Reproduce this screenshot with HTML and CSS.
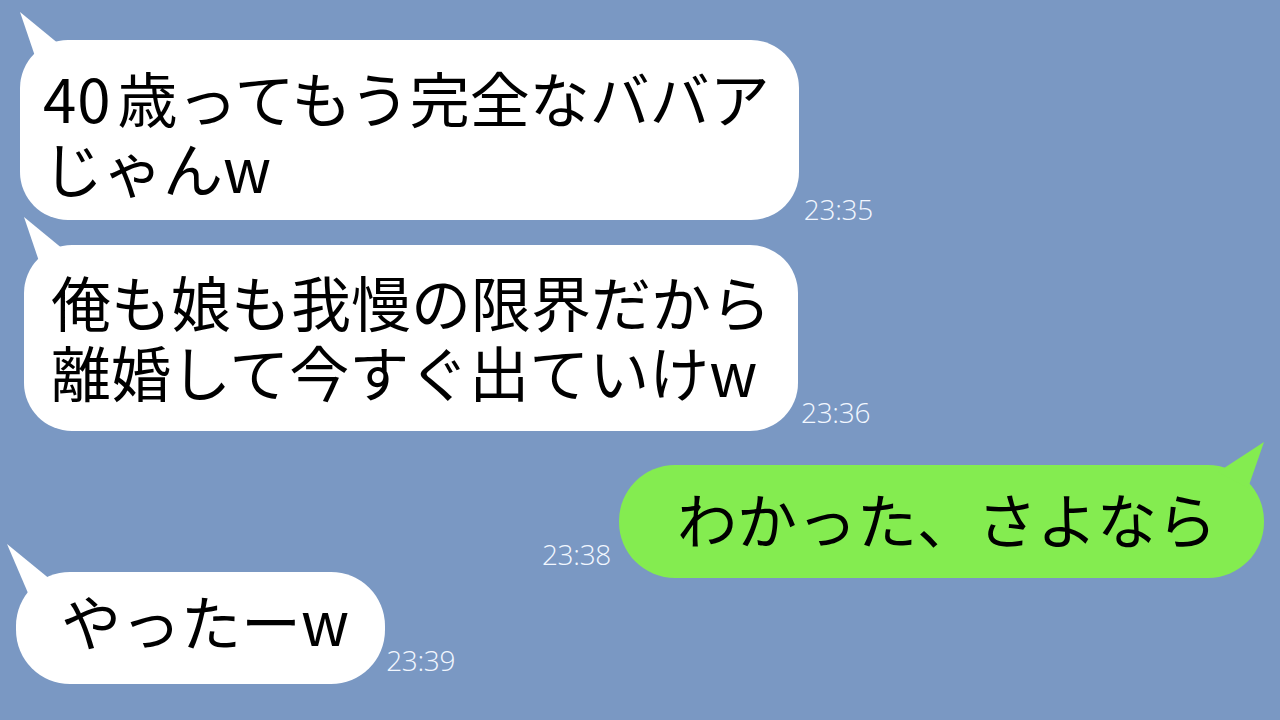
FILE: index.html
```html
<!DOCTYPE html>
<html lang="ja">
<head>
<meta charset="utf-8">
<title>トーク</title>
<link rel="stylesheet" href="styles.css">
</head>
<body>
<main class="chat">
  <div class="row row-in r1">
    <div class="bubble in b1"><span class="num">40</span>歳ってもう完全なババア<br>じゃんw</div>
    <span class="time t1">23:35</span>
  </div>
  <div class="row row-in r2">
    <div class="bubble in b2">俺も娘も我慢の限界だから<br>離婚して今すぐ出ていけw</div>
    <span class="time t2">23:36</span>
  </div>
  <div class="row row-out r3">
    <span class="time t3">23:38</span>
    <div class="bubble out b3">わかった、さよなら</div>
  </div>
  <div class="row row-in r4">
    <div class="bubble in b4">やったーw</div>
    <span class="time t4">23:39</span>
  </div>
</main>
</body>
</html>
```

FILE: styles.css
```css
html, body {
  margin: 0;
  padding: 0;
}
body {
  width: 1280px;
  height: 720px;
  overflow: hidden;
  background: #7a98c3;
  font-family: "Noto Sans CJK JP", "Noto Sans", sans-serif;
}
.chat {
  display: flex;
  flex-direction: column;
  padding-top: 40px;
}
.row {
  display: flex;
  align-items: flex-end;
}
.row-in {
  justify-content: flex-start;
}
.row-out {
  justify-content: flex-end;
  padding-right: 16px;
}
.r1 { padding-left: 20px; }
.r2 { padding-left: 24px; margin-top: 25px; }
.r3 { margin-top: 34px; }
.r4 { padding-left: 16px; margin-top: -6px; }

.bubble {
  position: relative;
  font-size: 60px;
  line-height: 70px;
  color: #000;
  white-space: nowrap;
  border-radius: 48px;
}
.in { background: #ffffff; }
.out { background: #84ec50; }

.num {
  letter-spacing: 1px;
  margin-right: 6px;
}

.bubble::before {
  content: "";
  position: absolute;
  width: 60px;
  height: 60px;
  background: inherit;
}
.in::before {
  left: -1px;
  top: -30px;
  clip-path: polygon(1px 2px, 46px 39px, 19px 55px);
}
.b4::before {
  left: -9px;
  clip-path: polygon(0px 2px, 44px 38px, 24px 58px);
}
.out::before {
  right: -1px;
  top: -25px;
  clip-path: polygon(59px 2px, 13px 32px, 43px 48px);
}

.b1 { padding: 22px 29px 18px 23px; }
.b2 { padding: 21px 27px 25px 27px; }
.b3 { padding: 18px 47px 25px 58px; border-radius: 56px; }
.b4 { padding: 13px 36px 29px 45px; border-radius: 54px; }

.time {
  font-family: "Open Sans", "Noto Sans", sans-serif;
  font-weight: 300;
  font-size: 28px;
  line-height: 28px;
  color: #f2f7ff;
  letter-spacing: -0.3px;
}
.t1 { margin-left: 5px; margin-bottom: -3px; }
.t2 { margin-left: 3px; margin-bottom: 5px; }
.t3 { margin-right: 8px; margin-bottom: 10px; }
.t4 { margin-left: 1px; margin-bottom: 10px; }
```
